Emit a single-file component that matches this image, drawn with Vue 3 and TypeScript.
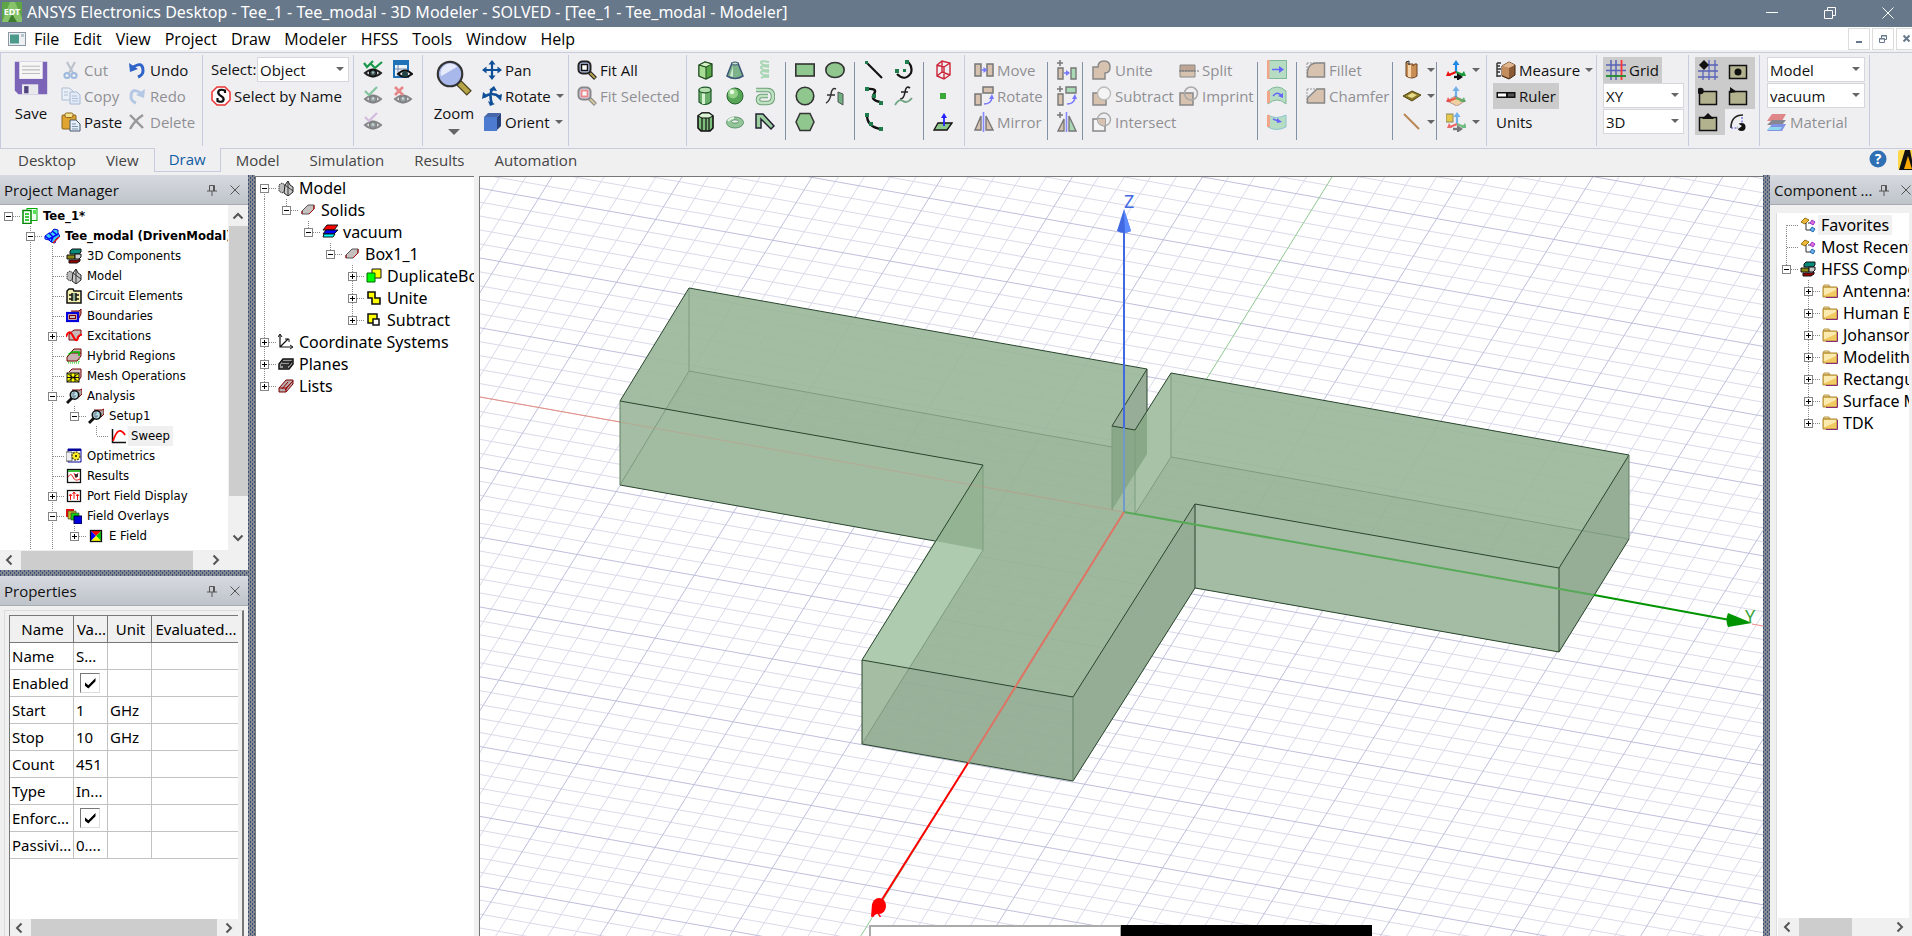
<script setup lang="ts">
import { ref } from 'vue'

interface TreeRow { cells: string; icon: string; label: string; bold?: boolean; selected?: boolean }
interface Tool { icon?: string; label?: string; tip?: string; off?: boolean; drop?: boolean; on?: boolean }

const GREEN = '#8fc78f'
const TAN = '#d6c2ae'
const eye = '<path d="M2 13q8-7 16 0q-8 7-16 0z" fill="#eee" stroke="#222" stroke-width="2"/><circle cx="10" cy="13" r="3.4" fill="#455" stroke="#111" stroke-width="1.6"/><circle cx="10" cy="12.500" r="1.200" fill="#9bb"/>'
const axes = '<path d="M10 13V3" stroke="#1e88e5" stroke-width="2.200"/><path d="M6.500 5L10 0l3.500 5z" fill="#1e88e5"/><path d="M10 12L3 15" stroke="#e11" stroke-width="2.200"/><path d="M0 16l2-5 3 5z" fill="#e11"/><path d="M10 12l7 3" stroke="#1b9a3a" stroke-width="2.200"/><path d="M20 16l-2-5-4 5z" fill="#1b9a3a"/>'
const lens = '<path d="M12.500 12.500l6 6" stroke="#222" stroke-width="4"/><path d="M13 13l5 5" stroke="#b9a34a" stroke-width="2"/><rect x="1.500" y="1.500" width="12" height="12" rx="4" fill="#b9c6ea" stroke="#222" stroke-width="2"/>'
const snap = (extra: string) => `<rect x="1.500" y="5.500" width="17" height="13" fill="#b2b28f" stroke="#111" stroke-width="1.500"/>${extra}`
const plus = '<path d="M3 0v6M0 3h6" stroke="#777" stroke-width="1.500"/>'

const toolIcons: Record<string, string> = {
  save: '<path d="M1 1h18v18H3l-2-2z" fill="#7b63b8"/><rect x="3.500" y="1" width="13" height="9.500" fill="#f6f6f6"/><path d="M5 3.500h10M5 5.500h10M5 7.500h10" stroke="#bbb" stroke-width=".6"/><rect x="5" y="13.500" width="9" height="5.500" fill="#e8e8ec"/><rect x="6.200" y="14.500" width="2.400" height="4" fill="#51427e"/>',
  zoomBig: '<path d="M12.500 12.500l6 6" stroke="#4c4420" stroke-width="4"/><path d="M13 13l5 5" stroke="#b8a548" stroke-width="2.600"/><circle cx="7.800" cy="7.800" r="6.800" fill="#a9b8ea" stroke="#333" stroke-width="1.200"/><path d="M2.800 9a5.300 5.300 0 0 1 9-5.200" fill="#e6ebfb"/>',
  cut: '<path d="M6 2l6 11M14 2L8 13" stroke="#8a98aa" stroke-width="2.200"/><circle cx="6" cy="15.500" r="2.600" fill="none" stroke="#4d84c9" stroke-width="2"/><circle cx="13" cy="15.500" r="2.600" fill="none" stroke="#4d84c9" stroke-width="2"/>',
  copy: '<path d="M1 2h7l4 3v9H1z" fill="#e9f0fb" stroke="#6d8fbf"/><path d="M9 6h7l3 3v9H9z" fill="#dce8fa" stroke="#5d83b8"/><path d="M11 10h5M11 12.500h6M11 15h6M3 6h4M3 9h4" stroke="#6d8fbf"/>',
  paste: '<rect x="1" y="3" width="14" height="14" rx="1" fill="#e0a530" stroke="#8b6318"/><rect x="4" y="1" width="8" height="4.500" rx="1.500" fill="#f5e08a" stroke="#8b6318"/><path d="M9 8h6l4 4v7H9z" fill="#e6eef8" stroke="#45566b"/><path d="M11 12h4M11 14.500h6M11 17h6" stroke="#7c93ad"/>',
  undo: '<path d="M5 8q11-8 11 3q0 4-5 6" fill="none" stroke="#2f63c8" stroke-width="3"/><path d="M2 3l1 9 8-3z" fill="#2f63c8"/>',
  redo: '<path d="M15 8Q4 0 4 11q0 4 5 6" fill="none" stroke="#7ba3d8" stroke-width="3"/><path d="M18 3l-1 9-8-3z" fill="#7ba3d8"/>',
  del: '<path d="M3 3q7 7 13 13M16 3Q8 8 3 17" fill="none" stroke="#444" stroke-width="2.400"/>',
  byName: '<path d="M6 1h8l5 5v8l-5 5H6l-5-5V6z" fill="#fff" stroke="#e33" stroke-width="1.500"/><path d="M14 7V4.500q-4-1.500-6 0q-2 2 .5 4.500l3 2q2 2 .5 4q-2 1.500-5.500 0V12" fill="none" stroke="#111" stroke-width="2.200"/>',
  eyeOn: eye + '<path d="M1 3l3 4 6-6M8 4l4 4 7-6" fill="none" stroke="#189a4a" stroke-width="2.200"/>',
  eyeGreen: eye + '<path d="M2 5l4 4 8-8" fill="none" stroke="#189a4a" stroke-width="2.200"/>',
  eyePurple: eye + '<path d="M2 5l4 4 8-8" fill="none" stroke="#b98acb" stroke-width="2.200"/>',
  eyeRed: eye + '<path d="M2 1l8 8M10 1L2 9" stroke="#e02020" stroke-width="2.600"/>',
  eyeList: '<rect x="1" y="1" width="14" height="16" fill="#eaf2fa" stroke="#1f71b8" stroke-width="2"/><rect x="1" y="1" width="14" height="4" fill="#1f71b8"/><path d="M5 5v11M2 9h12" stroke="#78a"/><g transform="translate(3 2)">' + '<path d="M2 12q7-7 14 0q-7 6-14 0z" fill="#eee" stroke="#111" stroke-width="2"/><circle cx="9" cy="12" r="3" fill="#244"/></g>',
  pan: '<path d="M10 2v16M2 10h16" stroke="#0f4f97" stroke-width="2.200"/><path d="M6.500 4.500L10 0l3.500 4.500zM6.500 15.500L10 20l3.500-4.500zM4.500 6.500L0 10l4.500 3.500zM15.500 6.500L20 10l-4.500 3.500z" fill="#0f4f97"/>',
  rotate: '<path d="M10 3q-3 7 0 15M2 11q8-6 16 0" fill="none" stroke="#0f4f97" stroke-width="2.600"/><path d="M7 4l5-4 3 5zM6 15l2 5 5-2zM0 13l1-7 5 4zM14 10l6-2-1 7z" fill="#0f4f97"/>',
  orient: '<path d="M2 5l4-4h13l-4 4z" fill="#4668a8"/><path d="M15 5l4-4v13l-4 4z" fill="#29437a"/><rect x="2" y="5" width="13" height="14" fill="#4d7bd0"/>',
  fitAll: lens + '<rect x="4.500" y="4.500" width="6" height="6" fill="#fff" stroke="#111" stroke-width="1.500"/>',
  fitSel: lens + '<rect x="4.500" y="4.500" width="6" height="6" fill="#fff" stroke="#e22" stroke-width="1.800"/>',
  box: '<path d="M4 5l6-3 7 2v12l-6 3-7-3z" fill="#5aa64a" stroke="#1c4a1c" stroke-width="1.300"/><path d="M4 5l7 2v12l-7-3z" fill="#a7dd94" stroke="#1c4a1c"/><path d="M4 5l6-3 7 2-6 3z" fill="#d4f0c4" stroke="#1c4a1c"/>',
  cone: '<path d="M7 3h6l5 13q-8 5-16 0z" fill="#7db38a" stroke="#3c5577" stroke-width="1.500"/><ellipse cx="10" cy="3.500" rx="3" ry="1.500" fill="#c9e5cd" stroke="#3c5577"/><path d="M8 6l-3 10 3 1z" fill="#c9e5cd"/>',
  helix: '<path d="M14 2Q5 0 6 3q2 3 8 2M14 7Q5 5 6 8q2 3 8 2M14 12Q5 10 6 13q2 3 8 2M14 17q-5-1-8 1" fill="none" stroke="#a9d6b4" stroke-width="2"/>',
  cyl: '<path d="M4 4v12q6 5 12 0V4z" fill="#6cae6c" stroke="#1f5a2a" stroke-width="1.200"/><path d="M7 5v13h3V5z" fill="#d6f1d0"/><ellipse cx="10" cy="4" rx="6" ry="2.800" fill="#b5dfae" stroke="#1f5a2a" stroke-width="1.200"/>',
  sphere: '<circle cx="10" cy="10" r="8" fill="#57a557" stroke="#24602c"/><circle cx="8" cy="7.500" r="5" fill="#93d088"/><circle cx="7" cy="6" r="2.300" fill="#e8fae2"/>',
  spiral: '<path d="M1 4h11q6 0 6 6.500T12 17H7q-4 0-4-3.500T7 10h6" fill="none" stroke="#6f9f78" stroke-width="4.500"/><path d="M1 4h11q6 0 6 6.500T12 17H7q-4 0-4-3.500T7 10h6" fill="none" stroke="#bfe3c2" stroke-width="2.500"/>',
  poly: '<path d="M3 4l4-3h7l4 3v12l-3 3H6l-3-3z" fill="#7cbf7c" stroke="#111" stroke-width="1.600"/><path d="M3 4l4 2h7l4-2-4-3H7z" fill="#d9f2d2" stroke="#111"/><path d="M7 6v13M11 6v13M14 6v13" stroke="#111" stroke-width="1.200"/>',
  torus: '<ellipse cx="10" cy="10.500" rx="8.500" ry="5.500" fill="#93c69b" stroke="#5f9468"/><ellipse cx="10" cy="9.500" rx="3.500" ry="1.700" fill="#efeff2" stroke="#5f9468"/><path d="M3 9q2-3 6-3" stroke="#e4f5e4" stroke-width="1.800" fill="none"/>',
  bend: '<path d="M1 2h7l11 12-3 3L6 7v9H1z" fill="#9ccf9f" stroke="#223" stroke-width="1.500"/>',
  rect: `<rect x=".8" y="4" width="18.400" height="12" fill="${GREEN}" stroke="#333" stroke-width="1.600"/>`,
  ellipse: `<ellipse cx="10" cy="10" rx="9.200" ry="7.500" fill="${GREEN}" stroke="#333" stroke-width="1.600"/>`,
  circle: `<circle cx="10" cy="10" r="8.800" fill="${GREEN}" stroke="#333" stroke-width="1.600"/>`,
  hexagon: `<path d="M5 1.500h10l4 8.500-4 8.500H5L1 10z" fill="${GREEN}" stroke="#333" stroke-width="1.500"/>`,
  fsurf: '<path d="M11 3q-4-2-5 5t-5 9M2 9h8" fill="none" stroke="#333" stroke-width="1.500"/><path d="M13 6l5 2v11l-5-3z" fill="#6fb183" stroke="#555"/>',
  line: '<path d="M2 2l16 16" stroke="#111" stroke-width="2.200"/><rect x="1" y="1" width="3" height="3" fill="#1f7a4c"/>',
  arc: '<path d="M3 14q8 8 14-1q2-7-4-12" fill="none" stroke="#111" stroke-width="2.200"/><path d="M1 9h4v4H1zM9 9h3v3H9zM11 0h4v4h-4z" fill="#1f7a4c"/>',
  spline: '<path d="M3 3q11-1 7 5t6 8" fill="none" stroke="#111" stroke-width="2.400"/><path d="M1 1h4v4H1zM8 8h4v4H8zM15 15h4v4h-4z" fill="#1f7a4c"/>',
  fcurve: '<path d="M16 2q-4-3-5 4t-5 7M7 6h7" fill="none" stroke="#222" stroke-width="1.600"/><path d="M1 19q4-7 8-4t9-3" fill="none" stroke="#6fa583" stroke-width="1.800"/>',
  arc3: '<path d="M3 3q0 12 14 14" fill="none" stroke="#111" stroke-width="2.400"/><path d="M1 1h4v4H1zM5 10h4v4H5zM15 15h4v4h-4z" fill="#1f7a4c"/>',
  redbox: '<path d="M4 5l5-4 8 2v12l-6 4-7-3zM4 5l7 2v12M11 7l6-4M9 1v11l-5 4M9 12l8 3" fill="none" stroke="#cc2438" stroke-width="1.400"/>',
  point: '<rect x="7" y="7" width="6" height="6" fill="#3aa93a"/>',
  plane: '<path d="M5 11h14l-5 7H1z" fill="#8cc78c" stroke="#111" stroke-width="1.300"/><path d="M11 14V4" stroke="#22f" stroke-width="1.800"/><path d="M8 6l3-5 3 5z" fill="#22f"/>',
  move: `<path d="M1 4h6v12H1zM13 4h6v12h-6z" fill="${TAN}" stroke="#777" stroke-width="1.500"/><path d="M7.500 10h4" stroke="#77f" stroke-width="1.500"/><path d="M9.500 7l4 3-4 3z" fill="#77f"/>`,
  rot: `<path d="M1 8h6v11H1zM9 1h10v6H9z" fill="${TAN}" stroke="#777" stroke-width="1.500"/><path d="M10 18q7 0 8-6" fill="none" stroke="#77f" stroke-width="1.500"/><path d="M15 13l3-5 2 5z" fill="#77f"/>`,
  mirror: `<path d="M7 4v14H1zM12 4v14h7z" fill="${TAN}" stroke="#777" stroke-width="1.400"/><path d="M9.500 0v20" stroke="#88f" stroke-width="1.600"/>`,
  dmove: plus + `<path d="M1 8h5v11H1z" fill="${TAN}" stroke="#777" stroke-width="1.400"/><path d="M14 8h5v11h-5z" fill="#a9dab5" stroke="#777" stroke-width="1.400"/><path d="M7 13h4" stroke="#77f" stroke-width="1.500"/><path d="M9 10l4 3-4 3z" fill="#77f"/>`,
  drot: plus + `<path d="M1 8h5v11H1z" fill="${TAN}" stroke="#777" stroke-width="1.400"/><path d="M9 1h10v6H9z" fill="#a9dab5" stroke="#777" stroke-width="1.400"/><path d="M10 18q7 0 8-6" fill="none" stroke="#77f" stroke-width="1.500"/><path d="M15 13l3-5 2 5z" fill="#77f"/>`,
  dmirror: plus + `<path d="M7 7v12H1z" fill="${TAN}" stroke="#777" stroke-width="1.400"/><path d="M12 4v15h7z" fill="#a9dab5" stroke="#777" stroke-width="1.400"/><path d="M9.500 0v20" stroke="#88f" stroke-width="1.600"/>`,
  unite: `<path d="M1 7h5q0-6 6-6t6 6-5 6v6H1z" fill="${TAN}" stroke="#888" stroke-width="1.500"/>`,
  subtract: `<path d="M1 7h13v12H1z" fill="${TAN}" stroke="#888" stroke-width="1.500"/><circle cx="12" cy="7.500" r="6.500" fill="#f4f4f4" stroke="#bbb" stroke-width="1.400"/>`,
  intersect: `<path d="M1 7h12v12H1z" fill="#f4f4f4" stroke="#888" stroke-width="1.500"/><circle cx="12" cy="7.500" r="6.500" fill="none" stroke="#aaa" stroke-width="1.400"/><path d="M6 7h7v6q-6 1-7-6z" fill="${TAN}"/>`,
  split: `<path d="M1 5h15v6H1z" fill="#bfa594" stroke="#888"/><path d="M1 11h15v6H1z" fill="${TAN}" stroke="#888"/><path d="M0 11h20" stroke="#777" stroke-dasharray="2 1"/>`,
  imprint: `<path d="M1 7h13v12H1z" fill="${TAN}" stroke="#888" stroke-width="1.500"/><circle cx="12" cy="7.500" r="6.500" fill="none" stroke="#aaa" stroke-width="1.600"/>`,
  sweep1: '<rect x=".5" y=".5" width="19" height="18" fill="#b7dcc4" stroke="#82b89a"/><path d="M1 0v19" stroke="#f3a58a" stroke-width="3"/><path d="M5 9.500h9" stroke="#66f" stroke-width="1.500"/><path d="M12 6l5 3.500-5 3.500z" fill="#66f"/>',
  sweep2: '<path d="M1 5q9-8 18 0v13q-9-8-18 0z" fill="#b7dcc4" stroke="#82b89a"/><path d="M1.500 5v12" stroke="#f3a58a" stroke-width="3"/><path d="M6 10q4-5 8-1" fill="none" stroke="#66f" stroke-width="1.500"/><path d="M11 10l5-3v5z" fill="#66f"/>',
  sweep3: '<path d="M1 3q8 5 18 0v12q-10 5-18 0z" fill="#b7dcc4" stroke="#8cc4cc"/><path d="M1.500 3v12" stroke="#f3a58a" stroke-width="3"/><path d="M6 7l5 2" stroke="#66f" stroke-width="1.500"/><path d="M10 6l5 4-5 1z" fill="#66f"/>',
  fillet: `<path d="M1 3h18M1 3v14" stroke="#999" stroke-dasharray="2 1"/><path d="M1.500 17V11Q3 3 11 3h7.500v14z" fill="${TAN}" stroke="#888" stroke-width="1.500"/>`,
  chamfer: `<path d="M1 3h18M1 3v14" stroke="#999" stroke-dasharray="2 1"/><path d="M1.500 17v-5L11 3h7.500v14z" fill="${TAN}" stroke="#888" stroke-width="1.500"/>`,
  copper: '<path d="M4 2v14q6 4 11 0V4q-3-1-4 2V4Q6 5 4 2z" fill="#c98f56" stroke="#6b4422"/><path d="M6 5v12l3 .5V5z" fill="#f7d5ac"/><path d="M4 2l3-1v4" fill="none" stroke="#333"/>',
  foil: '<path d="M1 10l9-5 9 4-9 6z" fill="#8a7a2a" stroke="#55480f"/><path d="M5 10l5-3 5 2-5 3z" fill="#e9dc8c"/>',
  wire: '<path d="M2 2l15 15" stroke="#b98656" stroke-width="2"/>',
  cs1: axes + '<path d="M8 17h5" stroke="#111" stroke-width="2.400"/><path d="M11 13l6 4-6 4z" fill="#111"/>',
  cs2: '<path d="M1 15l8-5 10 5-8 5z" fill="#f0cfa0" stroke="#b99"/><g opacity=".6">' + axes + '</g>',
  cs3: '<rect x="0" y="2" width="7" height="8" fill="#e5c84a" stroke="#886" /><g opacity=".6" transform="translate(1 0)">' + axes + '</g><path d="M7 17h5" stroke="#777" stroke-width="2.400"/><path d="M11 13l6 4-6 4z" fill="#777"/>',
  measure: '<path d="M1 3v14M1 3h4M1 6h3M1 9h4M1 12h3M1 16h4" stroke="#333" stroke-width="1.400"/><path d="M6 6l7-4 6 3v10l-6 4-7-3z" fill="#8c5a34" stroke="#40260f"/><path d="M6 6l7 2v10l-7-3z" fill="#c38d5e"/><path d="M6 6l7-4 6 3-6 3z" fill="#e1b68c"/>',
  ruler: '<rect x=".5" y="6" width="19" height="6" fill="#111"/><rect x="2" y="7.500" width="8" height="3" fill="#fff"/><rect x="12" y="7.500" width="6" height="3" fill="#555"/>',
  grid: '<path d="M5 0v20M10 0v20M0 5h20M0 10.500h20" stroke="#5963b8" stroke-width="1.500"/><path d="M15.500 0v20" stroke="#f33" stroke-width="1.800"/><path d="M0 16h20" stroke="#1c8a2c" stroke-width="1.800"/>',
  snapGrid: '<path d="M5 10v10M11 0v20M17 0v20M9 5h11M0 11h20M0 17h20" stroke="#5963b8" stroke-width="1.300"/><path d="M6 0l5 5-5 5-5-5z" fill="#111"/>',
  snapCenter: snap('<circle cx="10" cy="12" r="3.500" fill="#111"/>'),
  snapVertex: snap('<circle cx="2.500" cy="5" r="3.200" fill="#111"/>'),
  snapEdge: snap('<path d="M2 7V1l7 5z" fill="#111"/>'),
  snapMid: snap('<path d="M4 7l6-6 6 6z" fill="#111"/>'),
  snapArc: '<path d="M3 16q0-13 12-13" fill="none" stroke="#222" stroke-width="1.600"/><path d="M3 16h9M14 5v9" stroke="#44d" stroke-dasharray="2 1.500"/><circle cx="13.500" cy="15" r="4" fill="#111"/><path d="M8 10l6 4-4 3z" fill="#efeff2"/>',
  material: '<path d="M5 2h14l-4 7H0z" fill="#d02020"/><path d="M5 8h14l-4 5H0z" fill="#223"/><path d="M5 12h14l-4 7H0z" fill="#1a3ad8"/><path d="M3 15h12l-2 3H0z" fill="#2fc0ee"/>'
}

const slab = (f: string) => `<path d="M1 9l4-4h10v3l-4 5H1z" fill="${f}" stroke="#7a0000"/>`
const solid = '<path d="M2 12V9l6-6h6v4l-5 5z" fill="#c4c0c0" stroke="#555"/><path d="M2 12V9" stroke="#a00"/><path d="M9 12l5-5V3" fill="none" stroke="#a00"/>'
const stack = '<path d="M6 1h9v3l-2 2H4V3z" fill="#0a8a7a" stroke="#111"/><path d="M1 7h8v4H1z" fill="#8a8a10" stroke="#111"/><path d="M9 6h6v3l-2 2H9z" fill="#ccc" stroke="#111"/><path d="M3 12h9l2-1v2l-3 2H3z" fill="#900" stroke="#111"/>'
const magnify = '<path d="M6 2h8l2-1v5l-3 3" fill="#aaa" stroke="#800"/><path d="M1 15l5-5" stroke="#111" stroke-width="2.800"/><circle cx="8.500" cy="7" r="4.200" fill="#b9dfe6" stroke="#111" stroke-width="1.600"/><path d="M9 5H7v4h2V7" fill="none" stroke="#678"/>'

const treeIcons: Record<string, string> = {
  project: '<rect x="5" y=".5" width="10" height="12" fill="#efe" stroke="#0a0"/><rect x="1" y="2.500" width="8" height="13" fill="#fff" stroke="#080" stroke-width="1.500"/><path d="M3 6h4M3 9h4M3 12h4" stroke="#0b0" stroke-width="1.500"/><path d="M11 3h3M11 5h3" stroke="#2d2" stroke-width="1.500"/>',
  design: '<path d="M1 8l4-3h2l3-4 4 1v3l2 3-4 3-1 4-4-1-2-2-4-1z" fill="#3ad0f5" stroke="#00c"/><path d="M5 5l4 4 5-3M9 9l-2 5M1 8l4 3 4-2M8 3l4 3" stroke="#00f" stroke-width="1.500" fill="none"/><path d="M9 15l3-3 3-3" stroke="#e11" stroke-width="1.500"/>',
  comps: stack,
  model: '<path d="M1 5l3-2 3 2v6l-3 2-3-2z" fill="#bbb" stroke="#333" stroke-dasharray="1.500 .7"/><path d="M7 5l3-4 2 4 3 2v5l-5 4-4-3z" fill="#c8c8c8" stroke="#222"/><path d="M10 1v14M7 5l8 6" stroke="#333"/>',
  circuit: '<path d="M1 3l2-2h4l1 2h7v12H1z" fill="#f4f0b0" stroke="#111" stroke-width="1.500"/><rect x="6" y="5" width="4" height="8" fill="#8a8"/><path d="M6 5v8M10 5v8M3 7h3M3 11h3M10 7h3M10 11h3" stroke="#111" stroke-width="1.500"/>',
  bound: '<path d="M5 3h8l2-2v5l-2 4" fill="#b88" stroke="#700"/><rect x="1" y="5" width="11" height="8" fill="#d9b0b0" stroke="#00d" stroke-width="2.200"/><rect x="3.500" y="7.500" width="6" height="3" fill="#c4c0c0" stroke="#700"/>',
  excite: '<path d="M3 6l5-4h7v5l-5 5H3z" fill="#c4b8b8" stroke="#700"/><path d="M0 9q3-9 7-1t5 1q2-3 4-2" fill="none" stroke="#f00" stroke-width="2"/>',
  hybrid: '<path d="M4 5l4-4h7v4l-4 6" fill="#c8b0b0" stroke="#700"/><path d="M2 6h11v9H2z" fill="#d8f5d8" stroke="#0c0" stroke-dasharray="1 1"/>' + slab('#c8b0b0') + '<path d="M3 6l3-2h7v4" fill="none" stroke="#0b0" stroke-width="1.500"/>',
  mesh: '<path d="M3 4l3-3h9v8l-3 4" fill="#d8c0c0" stroke="#700"/><rect x="1" y="5" width="12" height="9" fill="#ff0" stroke="#111"/><path d="M5 5v9M9 5v9M1 9.500h12M1 5l12 9M13 5L1 14" stroke="#111"/>',
  magnify,
  sweep: '<path d="M2.500 1v13.500H16" fill="none" stroke="#111" stroke-width="1.500"/><path d="M3 13q3-9 6-10t6 4" fill="none" stroke="#f00" stroke-width="1.800"/>',
  opti: '<path d="M2 1h13v13H2z" fill="#fff" stroke="#009"/><path d="M2 1h13v2H2z" fill="#009"/><path d="M0 4v9h6V4z" fill="#eee" stroke="#666"/><circle cx="10" cy="8" r="4" fill="#fe2" stroke="#553" stroke-dasharray="2 1" stroke-width="1.500"/><circle cx="10" cy="8" r="1" fill="#111"/>',
  results: '<rect x="1.500" y="1.500" width="13" height="13" fill="#fff" stroke="#111" stroke-width="1.300"/><path d="M2 3h12" stroke="#0a0" stroke-width="1.500"/><path d="M2 9q3-5 5 0t7 2M8 5l2 5 2-5" fill="none" stroke="#d22"/><path d="M9 6h3v3H9z" fill="#333"/>',
  port: '<rect x="1.500" y="2.500" width="13" height="11" fill="#fff" stroke="#111" stroke-width="1.300"/><path d="M4.500 12V7M8 11V4M11.500 12V7M3 8l1.500-2L6 8M6.500 6L8 4l1.500 2M10 8l1.500-2L13 8" fill="none" stroke="#e11"/>',
  overlay: '<path d="M0 1h8v8H0z" fill="#e11"/><path d="M2 3h8v8H2z" fill="#bb2" stroke="#333" stroke-width=".6"/><path d="M5 5h8v7H5z" fill="#1c1" stroke="#333" stroke-width=".6"/><path d="M8 8h8v8H8z" fill="#00d" stroke="#003"/>',
  efield: '<path d="M3 3l5 5 5-5z" fill="#f00"/><path d="M3 3l5 5-5 5z" fill="#00f"/><path d="M13 3L8 8l5 5z" fill="#0c0"/><path d="M3 13l5-5 5 5z" fill="#ff0"/><rect x="2.500" y="2.500" width="11" height="11" fill="none" stroke="#111" stroke-width="1.300"/>',
  radiation: '<path d="M5 3h5v3H5z" fill="#ff0" stroke="#111"/>',
  solid,
  vacuum: '<path d="M5 1h11l-4 5H1z" fill="#f00" stroke="#111"/><path d="M4 6h12l-4 4H1z" fill="#00f" stroke="#111"/><path d="M2 10h11l-2 3H1z" fill="#0ff" stroke="#111"/>',
  duplicate: '<path d="M6 1h9v9H6z" fill="#ff0" stroke="#111"/><path d="M1 5h8v9H1z" fill="#0f0" stroke="#060"/>',
  unite: '<path d="M2 2h7v6h5v6H6V8H2z" fill="#ff0" stroke="#111" stroke-width="1.600"/>',
  subtract: '<path d="M2 2h9v9H2z" fill="#ff0" stroke="#111" stroke-width="1.500"/><rect x="7" y="7" width="6" height="6" fill="#fff" stroke="#111" stroke-width="1.500"/>',
  coord: '<path d="M2 1v12h12M2 13l8-8" fill="none" stroke="#111" stroke-width="1.200"/><path d="M0 3l2-3 2 3M12 11l3 2-3 2M7 5h4v3" fill="none" stroke="#111"/>',
  planes: '<path d="M1 8l4-5h10v5l-4 5H1z" fill="#999" stroke="#111" stroke-width="1.500"/><path d="M3 9h8l3-4M4 6h9M5 11h5" stroke="#111" stroke-width="1.300" fill="none"/>',
  lists: '<path d="M1 10l7-8h7v4l-7 8H1z" fill="#b9a9a9" stroke="#700"/><path d="M4 11l6-7M7 12l7-8M1 10h7v4M8 10l7-7" stroke="#900" fill="none"/>',
  fav: '<path d="M1 5l4-4 4 2-4 4z" fill="#eeb93a" stroke="#9a7010"/><path d="M6 6v7h5M8 6h4" stroke="#333" fill="none"/><path d="M12 3l3 2-2 3-3-2z" fill="#e070d8" stroke="#93c"/><path d="M12 10l3 2-2 3-3-2z" fill="#6ab0f0" stroke="#26a"/>',
  folder: '<path d="M1 4l1-2h5l1 2z" fill="#f6e3a4" stroke="#b89a50"/><path d="M1 4h14v10H1z" fill="#f1ca62" stroke="#a98535"/><path d="M2 5h12v2L3 12H2z" fill="#fbeab0"/><path d="M15.500 5v9.500H4" fill="none" stroke="#8a2a7a"/>'
}

/* Each cell of a row is one indent step: "." blank, "v" line, "t" tee, "l" elbow, "b" start; + and - add a toggle. */
const split = (s: string): string[] => s.match(/[.vtlbn][+-]?/g) ?? []

const projectTree: TreeRow[] = [
  { cells: 'n-', icon: 'project', label: 'Tee_1*', bold: true },
  { cells: '.t-', icon: 'design', label: 'Tee_modal (DrivenModal)', bold: true },
  { cells: '.vt', icon: 'comps', label: '3D Components' },
  { cells: '.vt', icon: 'model', label: 'Model' },
  { cells: '.vt', icon: 'circuit', label: 'Circuit Elements' },
  { cells: '.vt', icon: 'bound', label: 'Boundaries' },
  { cells: '.vt+', icon: 'excite', label: 'Excitations' },
  { cells: '.vt', icon: 'hybrid', label: 'Hybrid Regions' },
  { cells: '.vt', icon: 'mesh', label: 'Mesh Operations' },
  { cells: '.vt-', icon: 'magnify', label: 'Analysis' },
  { cells: '.vvl-', icon: 'magnify', label: 'Setup1' },
  { cells: '.vv.l', icon: 'sweep', label: 'Sweep', selected: true },
  { cells: '.vt', icon: 'opti', label: 'Optimetrics' },
  { cells: '.vt', icon: 'results', label: 'Results' },
  { cells: '.vt+', icon: 'port', label: 'Port Field Display' },
  { cells: '.vt-', icon: 'overlay', label: 'Field Overlays' },
  { cells: '.vvl+', icon: 'efield', label: 'E Field' },
  { cells: '.vt', icon: 'radiation', label: '' }
]
const modelTree: TreeRow[] = [
  { cells: 'b-', icon: 'model', label: 'Model' },
  { cells: 'vl-', icon: 'solid', label: 'Solids' },
  { cells: 'v.l-', icon: 'vacuum', label: 'vacuum' },
  { cells: 'v..l-', icon: 'solid', label: 'Box1_1' },
  { cells: 'v...t+', icon: 'duplicate', label: 'DuplicateBody' },
  { cells: 'v...t+', icon: 'unite', label: 'Unite' },
  { cells: 'v...l+', icon: 'subtract', label: 'Subtract' },
  { cells: 't+', icon: 'coord', label: 'Coordinate Systems' },
  { cells: 't+', icon: 'planes', label: 'Planes' },
  { cells: 'l+', icon: 'lists', label: 'Lists' }
]
const componentTree: TreeRow[] = [
  { cells: 'b', icon: 'fav', label: 'Favorites', selected: true },
  { cells: 't', icon: 'fav', label: 'Most Recently Used' },
  { cells: 'l-', icon: 'comps', label: 'HFSS Components' },
  ...['Antennas', 'Human Body', 'Johanson', 'Modelithics', 'Rectangular', 'Surface Mount', 'TDK'].map((label, i) => ({
    cells: i === 6 ? '.l+' : '.t+', icon: 'folder', label
  }))
]
const trees = { project: projectTree, model: modelTree, component: componentTree }

const menus = ['File', 'Edit', 'View', 'Project', 'Draw', 'Modeler', 'HFSS', 'Tools', 'Window', 'Help']
const tabs = ['Desktop', 'View', 'Draw', 'Model', 'Simulation', 'Results', 'Automation']
const activeTab = ref('Draw')

const t = (icon: string, label = '', o: Partial<Tool> = {}): Tool => ({ icon, label, ...o })
const off = { off: true }
const clipTools: Tool[] = [t('cut', 'Cut', off), t('copy', 'Copy', off), t('paste', 'Paste'), t('undo', 'Undo'), t('redo', 'Redo', off), t('del', 'Delete', off)]
const viewTools: Tool[] = [t('eyeOn'), t('eyeGreen', '', off), t('eyePurple', '', off), t('eyeList'), t('eyeRed', '', off)]
const navTools: Tool[] = [t('pan', 'Pan'), t('rotate', 'Rotate', { drop: true }), t('orient', 'Orient', { drop: true })]
const groups: { name: string; sep: string; tools: Tool[] }[] = [
  { name: 'fit', sep: 'light', tools: [t('fitAll', 'Fit All'), t('fitSel', 'Fit Selected', off)] },
  { name: 'solids', sep: 'dark', tools: ['box', 'cyl', 'poly', 'cone', 'sphere', 'torus', 'helix', 'spiral', 'bend'].map(n => t(n)) },
  { name: 'pair', sep: 'dark', tools: ['rect', 'circle', 'hexagon', 'ellipse', 'fsurf'].map(n => t(n)) },
  { name: 'pair', sep: 'dark', tools: ['line', 'spline', 'arc3', 'arc', 'fcurve'].map(n => t(n)) },
  { name: 'single', sep: 'light', tools: ['redbox', 'point', 'plane'].map(n => t(n)) },
  { name: 'edit', sep: 'dark', tools: [t('move', 'Move'), t('rot', 'Rotate'), t('mirror', 'Mirror')] },
  { name: 'dup', sep: 'dark', tools: ['dmove', 'drot', 'dmirror'].map(n => t(n)) },
  { name: 'bool', sep: 'dark', tools: [t('unite', 'Unite'), t('subtract', 'Subtract'), t('intersect', 'Intersect'), t('split', 'Split'), t('imprint', 'Imprint')] },
  { name: 'sweeps', sep: 'dark', tools: ['sweep1', 'sweep2', 'sweep3'].map(n => t(n)) },
  { name: 'fillet', sep: 'dark', tools: [t('fillet', 'Fillet'), t('chamfer', 'Chamfer')] },
  { name: 'stock', sep: 'dark', tools: ['copper', 'foil', 'wire'].map(n => t(n, '', { drop: true })) },
  { name: 'coords', sep: 'light', tools: [t('cs1', '', { drop: true }), t('cs2'), t('cs3', '', { drop: true })] },
  { name: 'measure', sep: 'light', tools: [t('measure', 'Measure', { drop: true }), t('ruler', 'Ruler', { on: true }), { label: 'Units' }] }
]
const muted = ['edit', 'bool', 'fillet']
const snapTools: Tool[] = [t('snapGrid', '', { on: true }), t('snapVertex', '', { on: true }), t('snapMid', '', { on: true }), t('snapCenter', '', { on: true }), t('snapEdge', '', { on: true }), t('snapArc')]

const props: { name: string; value?: string; unit?: string; check?: boolean }[] = [
  { name: 'Name', value: 'S...' },
  { name: 'Enabled', check: true },
  { name: 'Start', value: '1', unit: 'GHz' },
  { name: 'Stop', value: '10', unit: 'GHz' },
  { name: 'Count', value: '451' },
  { name: 'Type', value: 'In...' },
  { name: 'Enforc...', check: true },
  { name: 'Passivi...', value: '0....' }
]

/* Drawing plane: two families of parallel lines through the origin, every fifth one stronger. */
const O = { x: 644, y: 335 }
function gridPath(major: boolean): string {
  let d = ''
  for (let k = -60; k <= 90; k++) {
    if ((k % 5 === 0) !== major || k === 0) continue
    const y0 = O.y + k * 13.96
    d += `M0 ${(y0 - O.x * 0.1777).toFixed(1)}L2600 ${(y0 + (2600 - O.x) * 0.1777).toFixed(1)}`
    const x0 = O.x + k * 26.02
    d += `M${(x0 + O.y * 0.6225).toFixed(1)} 0L${(x0 - (1400 - O.y) * 0.6225).toFixed(1)} 1400`
  }
  return d
}
const minorGrid = gridPath(false)
const majorGrid = gridPath(true)
</script>

<template>
  <div class="app">
    <header class="titlebar">
      <svg class="logo" viewBox="0 0 20 20"><rect width="20" height="20" fill="#5ea546" /><path d="M0 20L8 0h5l7 16v4z" fill="#86c36a" /><path d="M6 20l4-8 5 8z" fill="#3c7d2e" /><text x="10" y="13" text-anchor="middle" font-size="9" font-weight="700" fill="#fff">EDT</text></svg>
      <h1>ANSYS Electronics Desktop - Tee_1 - Tee_modal - 3D Modeler - SOLVED - [Tee_1 - Tee_modal - Modeler]</h1>
      <button class="win" aria-label="Minimize"><svg viewBox="0 0 14 14"><path d="M1 6.500h12" /></svg></button>
      <button class="win" aria-label="Restore"><svg viewBox="0 0 14 14"><path d="M1.500 4.500h8v8h-8zM4.500 4V1.500h8v8H10" /></svg></button>
      <button class="win" aria-label="Close"><svg viewBox="0 0 14 14"><path d="M1.500 1.500l11 11M12.500 1.500l-11 11" /></svg></button>
    </header>

    <nav class="menubar">
      <svg class="doc" viewBox="0 0 18 14"><rect x=".5" y=".5" width="17" height="13" fill="#eef1f4" stroke="#8b97a3" /><rect x="2" y="2.500" width="9" height="9" fill="#4c9a8c" /><rect x="13" y="2" width="3" height="3" fill="#b9c4cf" /></svg>
      <button v-for="m in menus" :key="m" class="menu">{{ m }}</button>
      <span class="fill"></span>
      <button class="mdi" aria-label="Minimize document"><svg viewBox="0 0 10 10"><path d="M2 8h6" stroke-width="2" /></svg></button>
      <button class="mdi" aria-label="Restore document"><svg viewBox="0 0 10 10"><path d="M1.500 4.500h5v4h-5zM1 5h6M3.500 4V1.500h5v4H7M3 2h6" /></svg></button>
      <button class="mdi last" aria-label="Close document"><svg viewBox="0 0 10 10"><path d="M1.500 1.500l6 6M7.500 1.500l-6 6" stroke-width="2" /></svg></button>
    </nav>

    <section class="ribbon">
      <div class="group clip">
        <button class="big"><svg class="bigicon" viewBox="0 0 20 20" v-html="toolIcons.save"></svg><span>Save</span></button>
        <button v-for="x in clipTools" :key="x.label" class="tool" :class="{ off: x.off }"><svg class="ic" viewBox="0 0 20 20" v-html="toolIcons[x.icon!]"></svg><span>{{ x.label }}</span></button>
      </div>
      <i class="sep light"></i>
      <div class="group select">
        <div class="pick"><label for="sel-mode">Select:</label><span class="combo"><select id="sel-mode"><option>Object</option></select></span></div>
        <button class="tool"><svg class="ic" viewBox="0 0 20 20" v-html="toolIcons.byName"></svg><span>Select by Name</span></button>
      </div>
      <i class="sep light"></i>
      <div class="group pair">
        <button v-for="x in viewTools" :key="x.icon" class="tool only" :class="{ off: x.off }" :aria-label="x.icon"><svg class="ic" viewBox="0 0 20 20" v-html="toolIcons[x.icon!]"></svg></button>
      </div>
      <i class="sep light"></i>
      <div class="group nav">
        <button class="big"><svg class="bigicon" viewBox="0 0 20 20" v-html="toolIcons.zoomBig"></svg><span>Zoom</span><b class="arrow wide"></b></button>
        <button v-for="x in navTools" :key="x.label" class="tool"><svg class="ic" viewBox="0 0 20 20" v-html="toolIcons[x.icon!]"></svg><span>{{ x.label }}</span><b v-if="x.drop" class="arrow"></b></button>
      </div>
      <i class="sep light"></i>
      <template v-for="(g, gi) in groups" :key="gi">
        <div class="group" :class="g.name">
          <button v-for="(x, i) in g.tools" :key="i" class="tool" :class="{ only: !x.label, off: x.off, grey: muted.includes(g.name), on: x.on }" :aria-label="x.label || x.icon">
            <svg v-if="x.icon" class="ic" viewBox="0 0 20 20" v-html="toolIcons[x.icon]"></svg>
            <span v-if="x.label">{{ x.label }}</span>
            <b v-if="x.drop" class="arrow"></b>
          </button>
        </div>
        <i class="sep" :class="g.sep"></i>
      </template>
      <div class="group gridding">
        <button class="tool on"><svg class="ic" viewBox="0 0 20 20" v-html="toolIcons.grid"></svg><span>Grid</span></button>
        <span class="combo"><select aria-label="Drawing plane"><option>XY</option></select></span>
        <span class="combo"><select aria-label="Movement mode"><option>3D</option></select></span>
      </div>
      <i class="sep light"></i>
      <div class="group snaps">
        <button v-for="x in snapTools" :key="x.icon" class="tool only" :class="{ on: x.on }" :aria-label="x.icon"><svg class="ic" viewBox="0 0 20 20" v-html="toolIcons[x.icon!]"></svg></button>
      </div>
      <i class="sep light"></i>
      <div class="group mats">
        <span class="combo"><select aria-label="Object type"><option>Model</option></select></span>
        <span class="combo"><select aria-label="Default material"><option>vacuum</option></select></span>
        <button class="tool off"><svg class="ic" viewBox="0 0 20 20" v-html="toolIcons.material"></svg><span>Material</span></button>
      </div>
      <i class="sep light"></i>
    </section>

    <nav class="tabs">
      <button v-for="x in tabs" :key="x" class="tab" :class="{ active: x === activeTab }" @click="activeTab = x">{{ x }}</button>
      <span class="fill"></span>
      <button class="help" aria-label="Help"><svg viewBox="0 0 18 18"><circle cx="9" cy="9" r="8.500" fill="#2f6fb3" /><text x="9" y="14" text-anchor="middle" font-size="14" font-weight="700" fill="#fff">?</text></svg></button>
      <svg class="brand" viewBox="0 0 14 20"><rect width="20" height="20" rx="2" fill="#ffd84a" /><path d="M1 20L7 0h5l4 20z" fill="#111" /><path d="M6 19l4-13 4 13z" fill="#f8a800" /></svg>
    </nav>

    <main class="work">
      <aside class="dock">
        <div class="phead"><h2>Project Manager</h2><svg viewBox="0 0 12 12"><path d="M3.500 7V1.500h5V7M7.500 2v5M1 7h10M6 7v5" /></svg><svg viewBox="0 0 12 12"><path d="M1.500 1.500l9 9M10.500 1.500l-9 9" /></svg></div>
        <div class="ptree">
          <ul class="tree small">
            <li v-for="(r, i) in trees.project" :key="i">
              <i v-for="(c, j) in split(r.cells)" :key="j" class="cell" :class="['c' + (c[0] === '.' ? 'x' : c[0])]"><button v-if="c[1]" class="toggle" :class="{ plus: c[1] === '+' }" aria-label="Toggle"></button></i>
              <svg class="tic" viewBox="0 0 16 16" v-html="treeIcons[r.icon]"></svg>
              <span v-if="r.label" :class="{ bold: r.bold, chosen: r.selected }">{{ r.label }}</span>
            </li>
          </ul>
          <div class="vbar"><svg viewBox="0 0 12 8"><path d="M1.500 6.500L6 2l4.500 4.500" /></svg><div class="vthumb"></div><svg viewBox="0 0 12 8"><path d="M1.500 1.500L6 6l4.500-4.500" /></svg></div>
        </div>
        <div class="hbar proj"><svg viewBox="0 0 8 12"><path d="M6.500 1.500L2 6l4.500 4.500" /></svg><div class="track"><div class="hthumb"></div></div><svg viewBox="0 0 8 12"><path d="M1.500 1.500L6 6l-4.500 4.500" /></svg></div>
        <div class="hsplit"></div>
        <div class="phead"><h2>Properties</h2><svg viewBox="0 0 12 12"><path d="M3.500 7V1.500h5V7M7.500 2v5M1 7h10M6 7v5" /></svg><svg viewBox="0 0 12 12"><path d="M1.500 1.500l9 9M10.500 1.500l-9 9" /></svg></div>
        <div class="pframe">
          <div class="pbox">
            <table>
              <colgroup><col class="w1" /><col class="w2" /><col class="w3" /><col /></colgroup>
              <thead><tr><th>Name</th><th>Va...</th><th>Unit</th><th>Evaluated...</th></tr></thead>
              <tbody>
                <tr v-for="p in props" :key="p.name">
                  <td>{{ p.name }}</td>
                  <td><input v-if="p.check" type="checkbox" checked :aria-label="p.name" /><template v-else>{{ p.value }}</template></td>
                  <td>{{ p.unit }}</td>
                  <td></td>
                </tr>
              </tbody>
            </table>
            <span class="fill"></span>
            <div class="hbar prop"><svg viewBox="0 0 8 12"><path d="M6.500 1.500L2 6l4.500 4.500" /></svg><div class="track"><div class="hthumb"></div></div><svg viewBox="0 0 8 12"><path d="M1.500 1.500L6 6l-4.500 4.500" /></svg></div>
          </div>
        </div>
      </aside>
      <div class="vsplit"></div>

      <section class="history">
        <ul class="tree">
          <li v-for="(r, i) in trees.model" :key="i">
            <i v-for="(c, j) in split(r.cells)" :key="j" class="cell" :class="['c' + (c[0] === '.' ? 'x' : c[0])]"><button v-if="c[1]" class="toggle" :class="{ plus: c[1] === '+' }" aria-label="Toggle"></button></i>
            <svg class="tic" viewBox="0 0 16 16" v-html="treeIcons[r.icon]"></svg>
            <span>{{ r.label }}</span>
          </li>
        </ul>
      </section>

      <section class="viewport">
        <svg class="scene">
          <path :d="minorGrid" stroke="#dadaea" fill="none" />
          <path :d="majorGrid" stroke="#bfbfdc" fill="none" />
          <path d="M0 220L644 335M1272 447l400 72" stroke="#f08a8a" fill="none" />
          <path d="M852 0L644 335L364 786" stroke="#90c890" fill="none" />
          <g transform="translate(-480 -177)">
            <path d="M689 288L1147 369L1147 411L1171 373L1629 455V539L1559 652L1195 588L1073 781L862 744V660L935 541L620 485V401Z" fill="#9bb79b" fill-opacity=".92" />
            <path d="M689 371L1147 454L1112 510L1135 514L1171 457L1629 539L1559 652L1195 588L1073 781L862 744L983 550L620 485Z" fill="#6f806f" fill-opacity=".09" />
            <path d="M1147 369V411L1135 430L1112 426Z" fill="#98ad97" />
            <path d="M1135 430L1171 373V457L1135 514Z" fill="#a7c2a7" />
            <path d="M1112 426L1135 430L1147 411V454L1112 510Z" fill="#88a888" />
            <path d="M983 465V550L935 541Z" fill="#93b393" />
            <path d="M935 541L983 550L908 669L862 660Z" fill="#aecbb0" />
            <path d="M862 660L908 669L862 744Z" fill="#a4bda3" />
            <path d="M908 669L1073 697V781L862 744Z" fill="#93a793" fill-opacity=".45" />
            <path d="M1195 504V588L1073 781V697Z" fill="#94ab94" fill-opacity=".9" />
            <path d="M1629 455V539L1559 652V568Z" fill="#95ac95" fill-opacity=".9" />
            <path d="M1195 504L1559 568V652L1195 588Z" fill="#a4bea4" fill-opacity=".75" />
            <path d="M620 401L983 465L935 541L620 485Z" fill="#a4bea4" fill-opacity=".7" />
            <path d="M689 288V371L1112 447M689 371L620 485M983 465V550L862 744M1171 373V457L1629 539M1171 457L1135 514V430M1112 426V510" stroke="#7d9c7f" fill="none" />
            <path d="M480 397L1124 512" stroke="#c99a8a" stroke-opacity=".5" fill="none" />
            <path d="M689 288L1147 369L1112 426L1135 430L1171 373L1629 455L1559 568L1195 504L1073 697L862 660L983 465L620 401ZM620 485L935 541M862 660V744L1073 781L1195 588L1559 652L1629 539M1195 504V588M1559 568V652M1147 369V411" stroke="#2a452e" fill="none" />
            <path d="M620 401V485M1073 697V781M1629 455V539" stroke="#5f7f63" fill="none" />
            <path d="M1124 428V512" stroke="#7299cc" stroke-width="2" />
            <path d="M1124 228V428" stroke="#4169e1" stroke-width="2" />
            <path d="M1124 512L1594 595" stroke="#58aa58" stroke-width="2" />
            <path d="M1594 595L1730 620" stroke="#009400" stroke-width="2" />
            <path d="M1124 512L968 763" stroke="#dd7464" stroke-width="2" />
            <path d="M968 763L878 906" stroke="#f00" stroke-width="2" />
            <path d="M1124 209L1117 231Q1124 235 1131 231Z" fill="#4169e1" /><path d="M1124 209L1125 233L1131 231Z" fill="#5c8cff" />
            <path d="M1752 623L1728 613Q1725 620 1728 627Z" fill="#009400" />
            <ellipse cx="879" cy="906" rx="7" ry="8" fill="#f00" /><path d="M872 904L871 917L884 910Z" fill="#f00" />
            <text x="1124" y="208" font-size="18" fill="#4169e1">Z</text>
            <text x="1745" y="623" font-size="18" fill="#3aa43a">Y</text>
            <text x="872" y="917" font-size="16" fill="#f00">X</text>
            <path d="M870 960V926h251v34z" fill="#fff" stroke="#aaa" stroke-width="2" /><rect x="1121" y="925" width="251" height="40" fill="#000" />
          </g>
        </svg>
      </section>
      <div class="vsplit right"></div>

      <aside class="comp">
        <div class="phead"><h2>Component ...</h2><svg viewBox="0 0 12 12"><path d="M3.500 7V1.500h5V7M7.500 2v5M1 7h10M6 7v5" /></svg><svg viewBox="0 0 12 12"><path d="M1.500 1.500l9 9M10.500 1.500l-9 9" /></svg></div>
        <div class="cbox">
          <ul class="tree">
            <li v-for="(r, i) in trees.component" :key="i">
              <i v-for="(c, j) in split(r.cells)" :key="j" class="cell" :class="['c' + (c[0] === '.' ? 'x' : c[0])]"><button v-if="c[1]" class="toggle" :class="{ plus: c[1] === '+' }" aria-label="Toggle"></button></i>
              <svg class="tic" viewBox="0 0 16 16" v-html="treeIcons[r.icon]"></svg>
              <span :class="{ chosen: r.selected }">{{ r.label }}</span>
            </li>
          </ul>
          <div class="hbar lib"><svg viewBox="0 0 8 12"><path d="M6.500 1.500L2 6l4.500 4.500" /></svg><div class="track"><div class="hthumb"></div></div><svg viewBox="0 0 8 12"><path d="M1.500 1.500L6 6l-4.500 4.500" /></svg></div>
        </div>
      </aside>
    </main>
  </div>
</template>

<style>
body { margin: 0; overflow: hidden; }
</style>

<style scoped>
.app { display: flex; flex-direction: column; height: 100vh; background: #f0f0f0; color: #111; font-family: "Noto Sans", "Open Sans", sans-serif; font-size: 15px; line-height: 20px; overflow: hidden; }
.app * { box-sizing: border-box; }
button { border: 0; padding: 0; margin: 0; background: none; font: inherit; color: inherit; white-space: nowrap; }
svg { display: block; flex: none; }
.fill { flex: 1; }
h1, h2 { margin: 0; font-weight: 400; flex: 1; white-space: nowrap; overflow: hidden; }

.titlebar { display: flex; align-items: center; height: 27px; flex: none; background: #68788b; color: #fff; padding-left: 2px; }
.titlebar h1 { font-size: 16px; line-height: 24px; padding: 0 0 3px 5px; }
.logo { width: 20px; height: 20px; margin-bottom: 3px; }
.win { width: 58px; height: 24px; display: flex; justify-content: center; align-items: center; padding-left: 9px; margin-bottom: 2px; }
.win svg { width: 14px; height: 14px; fill: none; stroke: #fff; }

.menubar { display: flex; align-items: center; height: 23px; flex: none; background: #fff; padding-left: 8px; font-size: 16px; line-height: 22px; }
.doc { width: 18px; height: 14px; margin-right: 1px; }
.menu { padding: 0 7px; color: #000; font-family: "Open Sans", "Noto Sans", sans-serif; }
.mdi { width: 22px; height: 22px; margin-right: 2px; border: 1px solid #dcdcdc; display: flex; align-items: center; justify-content: center; }
.mdi.last { width: 16px; margin-right: 0; border-right: 0; justify-content: flex-end; }
.mdi svg { width: 10px; height: 10px; fill: none; stroke: #68788b; }

.ribbon { display: flex; height: 97px; flex: none; margin-top: 2px; background: #efeff2; border-top: 1px solid #c8cade; border-bottom: 1px solid #c8cade; border-left: 1px solid #c8cade; font-family: "Open Sans", "Noto Sans", sans-serif; }
.group { display: grid; grid-auto-flow: column; grid-template-rows: repeat(3, 26px); align-content: start; padding-top: 4px; flex: none; }
.sep { width: 1px; flex: none; }
.sep.light { background: #c8cade; margin: 2px 0; }
.sep.dark { background: #8291a3; margin: 9px 0 8px; }
.tool { display: flex; align-items: center; gap: 3px; text-align: left; height: 26px; min-width: 0; }
.tool.only { justify-content: center; }
.ic { width: 20px; height: 20px; }
.off, .grey { color: #8f8f93; }
.off .ic { opacity: .5; }
.on { background: #cbcbcb; }
.big { grid-row: 1 / 4; display: flex; flex-direction: column; align-items: center; padding-top: 3px; }
.bigicon { width: 36px; height: 36px; margin-bottom: 7px; }
.arrow { width: 0; height: 0; border: 4px solid transparent; border-top-color: #666; border-bottom: 0; margin-left: 2px; }
.arrow.wide { border-width: 6px 6px 0; margin: 6px 0 0; }

.clip { grid-template-columns: 60px 66px 75px; width: 201px; }
.select { grid-template-columns: 1fr; width: 150px; padding-left: 8px; }
.pick { display: flex; align-items: flex-start; }
.pick label { padding-top: 2px; flex: 1; }
.combo { position: relative; display: block; height: 25px; }
.pick .combo { width: 92px; margin-right: 4px; }
.combo select { appearance: none; width: 100%; height: 25px; padding: 0 16px 0 2px; border: 1px solid #d6d6dc; border-radius: 0; background: #fff; font: inherit; color: #111; }
.combo::after { content: ""; position: absolute; right: 5px; top: 10px; border: 4px solid transparent; border-top-color: #666; border-bottom: 0; }
.pair { grid-template-columns: 30px 30px; padding-left: 4px; width: 68px; }
.nav { grid-template-columns: 59px 86px; width: 145px; }
.nav .big { padding-left: 3px; }
.fit { width: 117px; padding-left: 8px; }
.solids { grid-template-columns: 30px 30px 30px; padding-left: 3px; width: 98px; }
.single { grid-template-columns: 30px; padding-left: 4px; width: 40px; }
.edit { padding-left: 9px; width: 82px; }
.dup { grid-template-columns: 30px; padding-left: 4px; width: 34px; }
.bool { grid-template-columns: 87px 78px; padding-left: 9px; width: 174px; }
.sweeps { grid-template-columns: 30px; padding-left: 4px; width: 38px; }
.fillet { padding-left: 9px; width: 95px; }
.stock { padding-left: 9px; width: 43px; }
.stock .tool { justify-content: flex-start; }
.coords { grid-template-columns: 34px; padding-left: 9px; width: 49px; }
.coords .tool { justify-content: space-between; }
.measure { justify-items: start; padding-left: 6px; width: 109px; }
.measure .tool { padding: 0 3px; }
.gridding { grid-template-columns: 81px; justify-items: start; padding-left: 6px; width: 91px; }
.gridding .tool { padding: 0 3px; }
.gridding .combo, .mats .combo { width: 100%; }
.snaps { grid-template-columns: 30px 30px; padding-left: 6px; width: 70px; }
.snaps .tool { padding-right: 4px; }
.mats { grid-template-columns: 98px; padding-left: 7px; width: 109px; }

.tabs { display: flex; align-items: flex-start; height: 26px; flex: none; padding-left: 3px; color: #444; font-family: "Open Sans", "Noto Sans", sans-serif; }
.tab { padding: 0 14px; height: 23px; line-height: 19px; border: 1px solid transparent; border-top: 0; }
.tab.active { background: #efeff2; border-color: #c8cade; color: #0f5ca0; margin-top: -1px; height: 24px; line-height: 21px; }
.help { margin: 1px 11px 0 0; }
.help svg { width: 18px; height: 18px; }
.brand { width: 14px; height: 20px; margin-top: 1px; }

.work { display: flex; flex: 1; min-height: 0; }
.dock { width: 248px; flex: none; display: flex; flex-direction: column; min-height: 0; }
.phead { display: flex; align-items: center; height: 30px; flex: none; background: linear-gradient(#d6dae0, #bfc4ca); border-bottom: 1px solid #a8acb2; padding: 0 7px 0 4px; font-family: "Open Sans", "Noto Sans", sans-serif; }
.phead h2 { font-size: 15px; line-height: 20px; }
.phead svg { width: 12px; height: 12px; fill: none; stroke: #555; margin-left: 11px; }
.ptree { display: flex; height: 345px; flex: none; background: #fff; overflow: hidden; }
.tree { list-style: none; margin: 0; padding: 1px 0 0; flex: 1; min-width: 0; overflow: hidden; font-size: 16px; }
.tree.small { font-family: "DejaVu Sans Condensed", "DejaVu Sans", sans-serif; font-size: 13px; }
.tree li { display: flex; align-items: center; height: 22px; white-space: nowrap; }
.tree.small li { height: 20px; }
.tree span { padding: 0 3px; margin-left: 2px; color: #000; }
.tree .chosen { background: #f0f0f0; }
.bold { font-weight: 700; }
.tic { width: 16px; height: 16px; }
.cell { width: 22px; height: 100%; flex: none; display: flex; align-items: center; padding-left: 4px; background-repeat: no-repeat; --d: repeating-linear-gradient(#888 0 1px, transparent 1px 2px); --h: repeating-linear-gradient(90deg, #888 0 1px, transparent 1px 2px); }
.cv { background-image: var(--d); background-size: 1px 100%; background-position: 8px 0; }
.ct { background-image: var(--d), var(--h); background-size: 1px 100%, 12px 1px; background-position: 8px 0, 9px 50%; }
.cl { background-image: var(--d), var(--h); background-size: 1px 50%, 12px 1px; background-position: 8px 0, 9px 50%; }
.cb { background-image: var(--d), var(--h); background-size: 1px 50%, 12px 1px; background-position: 8px 100%, 9px 50%; }
.cn { background-image: var(--h); background-size: 12px 1px; background-position: 9px 50%; }
.toggle { width: 9px; height: 9px; border: 1px solid #848484; background: linear-gradient(#000, #000) center / 5px 1px no-repeat #fff; }
.toggle.plus { background: linear-gradient(#000, #000) center / 5px 1px no-repeat, linear-gradient(#000, #000) center / 1px 5px no-repeat #fff; }

.vbar { width: 20px; flex: none; background: #f0f0f0; display: flex; flex-direction: column; align-items: center; padding-top: 7px; }
.vbar svg { width: 12px; height: 8px; fill: none; stroke: #555; stroke-width: 2; }
.vthumb { width: 19px; height: 270px; background: #cdcdcd; margin: 6px 0 38px; }
.hbar { display: flex; align-items: center; height: 20px; flex: none; background: #f0f0f0; padding: 0 5px; }
.hbar svg { width: 8px; height: 12px; fill: none; stroke: #555; stroke-width: 2; }
.track { flex: 1; margin: 0 8px; height: 19px; }
.hthumb { height: 100%; background: #cdcdcd; }
.proj { padding-right: 28px; }
.proj .hthumb { width: 94%; }
.hsplit { height: 6px; flex: none; }
.hsplit, .vsplit { background-color: #868b92; background-image: conic-gradient(at 25% 50%, transparent 75%, #3a4f7d 0), conic-gradient(at 25% 50%, transparent 75%, #3a4f7d 0); background-size: 4px 4px; background-position: 0 0, 2px 2px; }
.vsplit { width: 7px; flex: none; }
.pframe { flex: 1; min-height: 0; margin: 4px 4px 0; border: 1px solid #dcdcdc; border-right: 2px solid #777; border-bottom: 0; padding: 4px 4px 0; display: flex; }
.pbox { flex: 1; min-width: 0; display: flex; flex-direction: column; background: #fff; border: solid #777; border-width: 1px 0 0 1px; overflow: hidden; }
table { border-collapse: separate; border-spacing: 0; table-layout: fixed; width: 100%; font-size: 15px; }
.w1 { width: 64px; } .w2 { width: 34px; } .w3 { width: 44px; }
th, td { height: 27px; padding: 0 0 0 2px; text-align: left; font-weight: 400; white-space: nowrap; overflow: hidden; border-right: 1px solid #c2c2c2; border-bottom: 1px solid #c2c2c2; color: #000; }
th { background: #f0f0f0; text-align: center; border-right-color: #777; border-bottom-color: #777; }
th:last-child, td:last-child { border-right: 0; }
input[type="checkbox"] { appearance: none; display: flex; align-items: center; justify-content: center; margin: 0 0 0 4px; width: 20px; height: 20px; background: #fff; border: 1px solid; border-color: #777 #ddd #ddd #777; }
input[type="checkbox"]:checked::before { content: ""; width: 11px; height: 11px; background: #000; clip-path: polygon(0 40%, 35% 70%, 100% 5%, 100% 35%, 35% 100%, 0 72%); }
.prop { height: 17px; }
.prop .track { height: 17px; }
.history { width: 219px; flex: none; margin: 1px 5px 0 0; background: #fff; border-top: 1px solid #777; border-left: 1px solid #777; overflow: hidden; display: flex; }
.history .tree { padding-top: 0; }
.viewport { flex: 1; min-width: 0; display: flex; margin-top: 1px; background: #fff; border-top: 1px solid #777; border-left: 1px solid #777; overflow: hidden; }
.scene { flex: 1; width: 100%; height: 100%; min-width: 0; }
.comp { width: 142px; flex: none; display: flex; flex-direction: column; min-height: 0; overflow: hidden; }
.comp .phead { padding-right: 0; }
.comp .phead svg { margin-left: 10px; }
.comp .phead h2 + svg { margin-left: 4px; }
.cbox { flex: 1; min-height: 0; margin: 8px 3px 0 6px; border-left: 1px solid #ddd; background: #fff; display: flex; flex-direction: column; overflow: hidden; padding-left: 1px; }
.lib { height: 18px; }
.lib .hthumb { width: 60%; }
</style>
